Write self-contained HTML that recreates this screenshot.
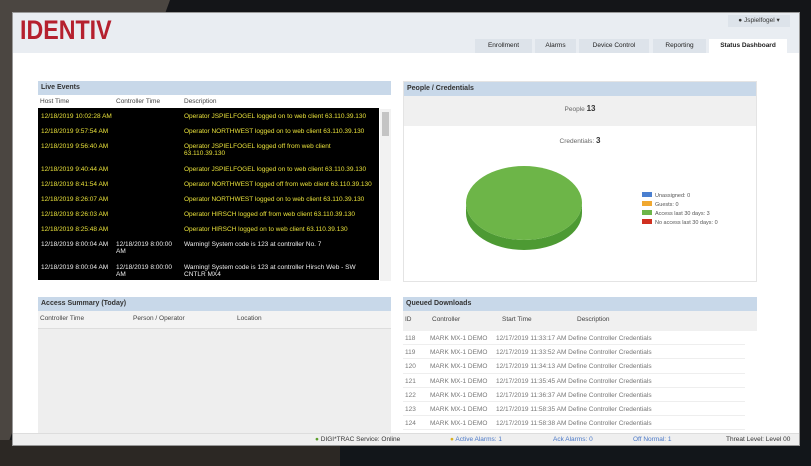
<!DOCTYPE html>
<html><head><style>
*{margin:0;padding:0;box-sizing:border-box}
body{width:811px;height:466px;overflow:hidden;position:relative;background:#141518;font-family:"Liberation Sans",sans-serif;font-size:7px;color:#333}
.a{position:absolute}
.hd{background:#c8d8e9;font-size:7px;font-weight:bold;color:#333;padding:3px 3px;height:14px}
.ev div{height:15px;display:flex;color:#e8e03a;font-size:6.5px;line-height:7px;padding-top:3px}
.ev span{display:block}
.c1{width:78px;padding-left:3px}.c2{width:68px}.c3{flex:1}
.q div{height:14.2px;display:flex;border-bottom:1px solid #eee;color:#777;font-size:6.5px;padding-top:4px}
.tab{position:absolute;top:38px;height:14px;background:#dde3ea;font-size:6.5px;color:#222;text-align:center;line-height:14px}
</style></head><body>
<div class="a" style="left:0;top:0;width:0;height:0;border-top:466px solid #4b4641;border-right:170px solid transparent"></div>
<div class="a" style="left:0;top:440px;width:811px;height:26px;background:#12161a"></div>
<div class="a" style="left:0;top:440px;height:26px;background:#2c2824;width:340px"></div>
<div class="a" style="left:12px;top:12px;width:788px;height:434px;background:#fff;border:1px solid #999">
 <div class="a" style="left:0;top:0;width:786px;height:40px;background:#e9edf2"></div>
 <div class="a" style="left:7px;top:2px;font-size:27px;font-weight:bold;color:#b5202e;line-height:30px;transform:scaleX(0.86);transform-origin:left">IDENTIV</div>
 <div class="a" style="left:715px;top:2px;width:62px;height:12px;background:#dde3ea;font-size:6.5px;line-height:12px;text-align:center">&#9679; Jspielfogel ▾</div>
 <div class="tab" style="left:462px;top:26px;width:57px">Enrollment</div>
 <div class="tab" style="left:522px;top:26px;width:41px">Alarms</div>
 <div class="tab" style="left:566px;top:26px;width:70px">Device Control</div>
 <div class="tab" style="left:640px;top:26px;width:53px">Reporting</div>
 <div class="tab" style="left:696px;top:26px;width:78px;background:#fff;font-weight:bold">Status Dashboard</div>

 <div class="a" style="left:25px;top:68px;width:353px">
  <div class="hd">Live Events</div>
  <div style="height:13px;display:flex;font-size:6.5px;color:#444;padding-top:3px"><span style="width:78px;padding-left:2px">Host Time</span><span style="width:68px">Controller Time</span><span>Description</span></div>
  <div class="ev" style="background:#000;width:341px;height:172px;padding-top:2px">
   <div><span class="c1">12/18/2019 10:02:28 AM</span><span class="c2"></span><span class="c3">Operator JSPIELFOGEL logged on to web client 63.110.39.130</span></div>
   <div><span class="c1">12/18/2019 9:57:54 AM</span><span class="c2"></span><span class="c3">Operator NORTHWEST logged on to web client 63.110.39.130</span></div>
   <div style="height:23px"><span class="c1">12/18/2019 9:56:40 AM</span><span class="c2"></span><span class="c3">Operator JSPIELFOGEL logged off from web client<br>63.110.39.130</span></div>
   <div><span class="c1">12/18/2019 9:40:44 AM</span><span class="c2"></span><span class="c3">Operator JSPIELFOGEL logged on to web client 63.110.39.130</span></div>
   <div><span class="c1">12/18/2019 8:41:54 AM</span><span class="c2"></span><span class="c3">Operator NORTHWEST logged off from web client 63.110.39.130</span></div>
   <div><span class="c1">12/18/2019 8:26:07 AM</span><span class="c2"></span><span class="c3">Operator NORTHWEST logged on to web client 63.110.39.130</span></div>
   <div><span class="c1">12/18/2019 8:26:03 AM</span><span class="c2"></span><span class="c3">Operator HIRSCH logged off from web client 63.110.39.130</span></div>
   <div><span class="c1">12/18/2019 8:25:48 AM</span><span class="c2"></span><span class="c3">Operator HIRSCH logged on to web client 63.110.39.130</span></div>
   <div style="height:23px;color:#eee"><span class="c1">12/18/2019 8:00:04 AM</span><span class="c2">12/18/2019 8:00:00<br>AM</span><span class="c3">Warning! System code is 123 at controller No. 7</span></div>
   <div style="height:22px;color:#eee"><span class="c1">12/18/2019 8:00:04 AM</span><span class="c2">12/18/2019 8:00:00<br>AM</span><span class="c3">Warning! System code is 123 at controller Hirsch Web - SW<br>CNTLR MX4</span></div>
  </div>
  <div class="a" style="left:342px;top:28px;width:11px;height:172px;background:#f2f2f2"><div style="margin:3px 2px;height:24px;background:#c4c4c4"></div></div>
 </div>

 <div class="a" style="left:390px;top:68px;width:354px;height:201px;border:1px solid #e4e4e4">
  <div class="hd">People / Credentials</div>
  <div style="height:30px;background:#f0f0f0;text-align:center;line-height:26px;font-size:6.5px;color:#666">People <b style="font-size:8px;color:#333">13</b></div>
  <div style="text-align:center;font-size:6.5px;color:#666;margin-top:10px">Credentials: <b style="font-size:8px;color:#333">3</b></div>
  <svg class="a" style="left:0;top:76px" width="354" height="100">
   <path d="M62 45 A58 37 0 0 0 178 45 L178 55 A58 37 0 0 1 62 55 Z" fill="#4d9a33"/>
   <ellipse cx="120" cy="45" rx="58" ry="37" fill="#6db548"/>
   <rect x="238" y="34" width="10" height="5" fill="#4a7fd0"/><text x="251" y="39" font-size="5.5" fill="#555" font-family="Liberation Sans">Unassigned: 0</text>
   <rect x="238" y="43" width="10" height="5" fill="#f0a830"/><text x="251" y="48" font-size="5.5" fill="#555" font-family="Liberation Sans">Guests: 0</text>
   <rect x="238" y="52" width="10" height="5" fill="#6db548"/><text x="251" y="57" font-size="5.5" fill="#555" font-family="Liberation Sans">Access last 30 days: 3</text>
   <rect x="238" y="61" width="10" height="5" fill="#d03020"/><text x="251" y="66" font-size="5.5" fill="#555" font-family="Liberation Sans">No access last 30 days: 0</text>
  </svg>
 </div>

 <div class="a" style="left:25px;top:284px;width:353px;height:136px;background:#eeeeee">
  <div class="hd">Access Summary (Today)</div>
  <div style="height:18px;display:flex;font-size:6.5px;color:#444;padding:4px 2px;background:#f3f3f3;border-bottom:1px solid #ddd"><span style="width:93px">Controller Time</span><span style="width:104px">Person / Operator</span><span>Location</span></div>
 </div>

 <div class="a" style="left:390px;top:284px;width:354px;height:136px">
  <div class="hd">Queued Downloads</div>
  <div style="height:20px;display:flex;font-size:6.5px;color:#444;padding:5px 2px;background:#f0f0f0"><span style="width:27px">ID</span><span style="width:70px">Controller</span><span style="width:75px">Start Time</span><span>Description</span></div>
  <div class="q" style="width:342px">
   <div><span style="width:27px;padding-left:2px">118</span><span style="width:66px">MARK MX-1 DEMO</span><span>12/17/2019 11:33:17 AM Define Controller Credentials</span></div>
   <div><span style="width:27px;padding-left:2px">119</span><span style="width:66px">MARK MX-1 DEMO</span><span>12/17/2019 11:33:52 AM Define Controller Credentials</span></div>
   <div><span style="width:27px;padding-left:2px">120</span><span style="width:66px">MARK MX-1 DEMO</span><span>12/17/2019 11:34:13 AM Define Controller Credentials</span></div>
   <div><span style="width:27px;padding-left:2px">121</span><span style="width:66px">MARK MX-1 DEMO</span><span>12/17/2019 11:35:45 AM Define Controller Credentials</span></div>
   <div><span style="width:27px;padding-left:2px">122</span><span style="width:66px">MARK MX-1 DEMO</span><span>12/17/2019 11:36:37 AM Define Controller Credentials</span></div>
   <div><span style="width:27px;padding-left:2px">123</span><span style="width:66px">MARK MX-1 DEMO</span><span>12/17/2019 11:58:35 AM Define Controller Credentials</span></div>
   <div><span style="width:27px;padding-left:2px">124</span><span style="width:66px">MARK MX-1 DEMO</span><span>12/17/2019 11:58:38 AM Define Controller Credentials</span></div>
  </div>
 </div>

 <div class="a" style="left:0;top:420px;width:786px;height:12px;background:#efefef;border-top:1px solid #ddd;font-size:6.5px;line-height:11px">
  <span class="a" style="left:302px;color:#333"><span style="color:#5a9e2a">●</span> DIGI*TRAC Service: Online</span>
  <span class="a" style="left:437px;color:#4a78c8"><span style="color:#d8b020">●</span> Active Alarms: 1</span>
  <span class="a" style="left:540px;color:#4a78c8">Ack Alarms: 0</span>
  <span class="a" style="left:620px;color:#4a78c8">Off Normal: 1</span>
  <span class="a" style="left:713px;color:#333">Threat Level: Level 00</span>
 </div>
</div>
</body></html>
